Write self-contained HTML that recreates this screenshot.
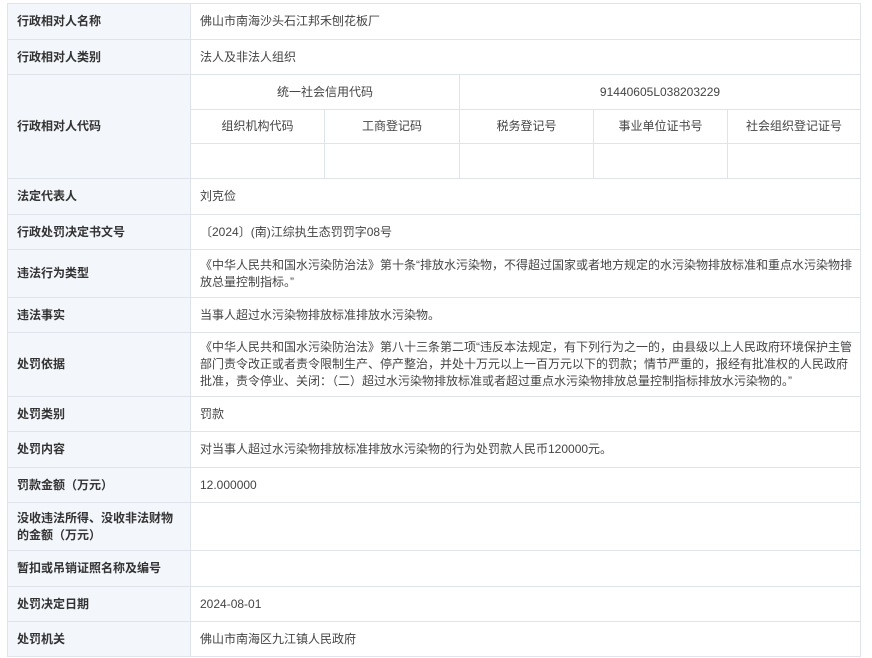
<!DOCTYPE html>
<html><head><meta charset="utf-8"><style>
body{margin:0;background:#fff;font-family:"Liberation Sans","Noto Sans CJK SC",sans-serif;font-size:12px;color:#333;}
.c{position:absolute;box-sizing:border-box;border:1px solid #dfe4ec;margin:0 -1px -1px 0;display:flex;align-items:center;line-height:17px;}
.l{background:#f3f6fb;padding-left:9px;padding-right:14px;font-weight:bold;color:#333;}
.v{padding-left:9px;padding-right:8px;color:#444;}
.m{justify-content:center;color:#444;}
</style></head><body>
<div class="c l" style="left:7px;top:3px;width:184px;height:37px">行政相对人名称</div>
<div class="c v" style="left:190px;top:3px;width:671px;height:37px">佛山市南海沙头石江邦禾刨花板厂</div>
<div class="c l" style="left:7px;top:39px;width:184px;height:36px">行政相对人类别</div>
<div class="c v" style="left:190px;top:39px;width:671px;height:36px">法人及非法人组织</div>
<div class="c l" style="left:7px;top:74px;width:184px;height:105px">行政相对人代码</div>
<div class="c m" style="left:190px;top:74px;width:270px;height:36px">统一社会信用代码</div>
<div class="c m" style="left:459px;top:74px;width:402px;height:36px">91440605L038203229</div>
<div class="c m" style="left:190px;top:109px;width:135px;height:35px">组织机构代码</div>
<div class="c m" style="left:324px;top:109px;width:136px;height:35px">工商登记码</div>
<div class="c m" style="left:459px;top:109px;width:135px;height:35px">税务登记号</div>
<div class="c m" style="left:593px;top:109px;width:135px;height:35px">事业单位证书号</div>
<div class="c m" style="left:727px;top:109px;width:134px;height:35px">社会组织登记证号</div>
<div class="c" style="left:190px;top:143px;width:135px;height:36px"></div>
<div class="c" style="left:324px;top:143px;width:136px;height:36px"></div>
<div class="c" style="left:459px;top:143px;width:135px;height:36px"></div>
<div class="c" style="left:593px;top:143px;width:135px;height:36px"></div>
<div class="c" style="left:727px;top:143px;width:134px;height:36px"></div>
<div class="c l" style="left:7px;top:178px;width:184px;height:37px">法定代表人</div>
<div class="c v" style="left:190px;top:178px;width:671px;height:37px">刘克俭</div>
<div class="c l" style="left:7px;top:214px;width:184px;height:36px">行政处罚决定书文号</div>
<div class="c v" style="left:190px;top:214px;width:671px;height:36px">〔2024〕(南)江综执生态罚罚字08号</div>
<div class="c l" style="left:7px;top:249px;width:184px;height:49px">违法行为类型</div>
<div class="c v" style="left:190px;top:249px;width:671px;height:49px">《中华人民共和国水污染防治法》第十条“排放水污染物，不得超过国家或者地方规定的水污染物排放标准和重点水污染物排放总量控制指标。”</div>
<div class="c l" style="left:7px;top:297px;width:184px;height:36px">违法事实</div>
<div class="c v" style="left:190px;top:297px;width:671px;height:36px">当事人超过水污染物排放标准排放水污染物。</div>
<div class="c l" style="left:7px;top:332px;width:184px;height:65px">处罚依据</div>
<div class="c v" style="left:190px;top:332px;width:671px;height:65px">《中华人民共和国水污染防治法》第八十三条第二项“违反本法规定，有下列行为之一的，由县级以上人民政府环境保护主管部门责令改正或者责令限制生产、停产整治，并处十万元以上一百万元以下的罚款；情节严重的，报经有批准权的人民政府批准，责令停业、关闭：（二）超过水污染物排放标准或者超过重点水污染物排放总量控制指标排放水污染物的。”</div>
<div class="c l" style="left:7px;top:396px;width:184px;height:36px">处罚类别</div>
<div class="c v" style="left:190px;top:396px;width:671px;height:36px">罚款</div>
<div class="c l" style="left:7px;top:431px;width:184px;height:37px">处罚内容</div>
<div class="c v" style="left:190px;top:431px;width:671px;height:37px">对当事人超过水污染物排放标准排放水污染物的行为处罚款人民币120000元。</div>
<div class="c l" style="left:7px;top:467px;width:184px;height:36px">罚款金额（万元）</div>
<div class="c v" style="left:190px;top:467px;width:671px;height:36px">12.000000</div>
<div class="c l" style="left:7px;top:502px;width:184px;height:49px">没收违法所得、没收非法财物的金额（万元）</div>
<div class="c v" style="left:190px;top:502px;width:671px;height:49px"></div>
<div class="c l" style="left:7px;top:550px;width:184px;height:37px">暂扣或吊销证照名称及编号</div>
<div class="c v" style="left:190px;top:550px;width:671px;height:37px"></div>
<div class="c l" style="left:7px;top:586px;width:184px;height:36px">处罚决定日期</div>
<div class="c v" style="left:190px;top:586px;width:671px;height:36px">2024-08-01</div>
<div class="c l" style="left:7px;top:621px;width:184px;height:36px">处罚机关</div>
<div class="c v" style="left:190px;top:621px;width:671px;height:36px">佛山市南海区九江镇人民政府</div>
</body></html>
